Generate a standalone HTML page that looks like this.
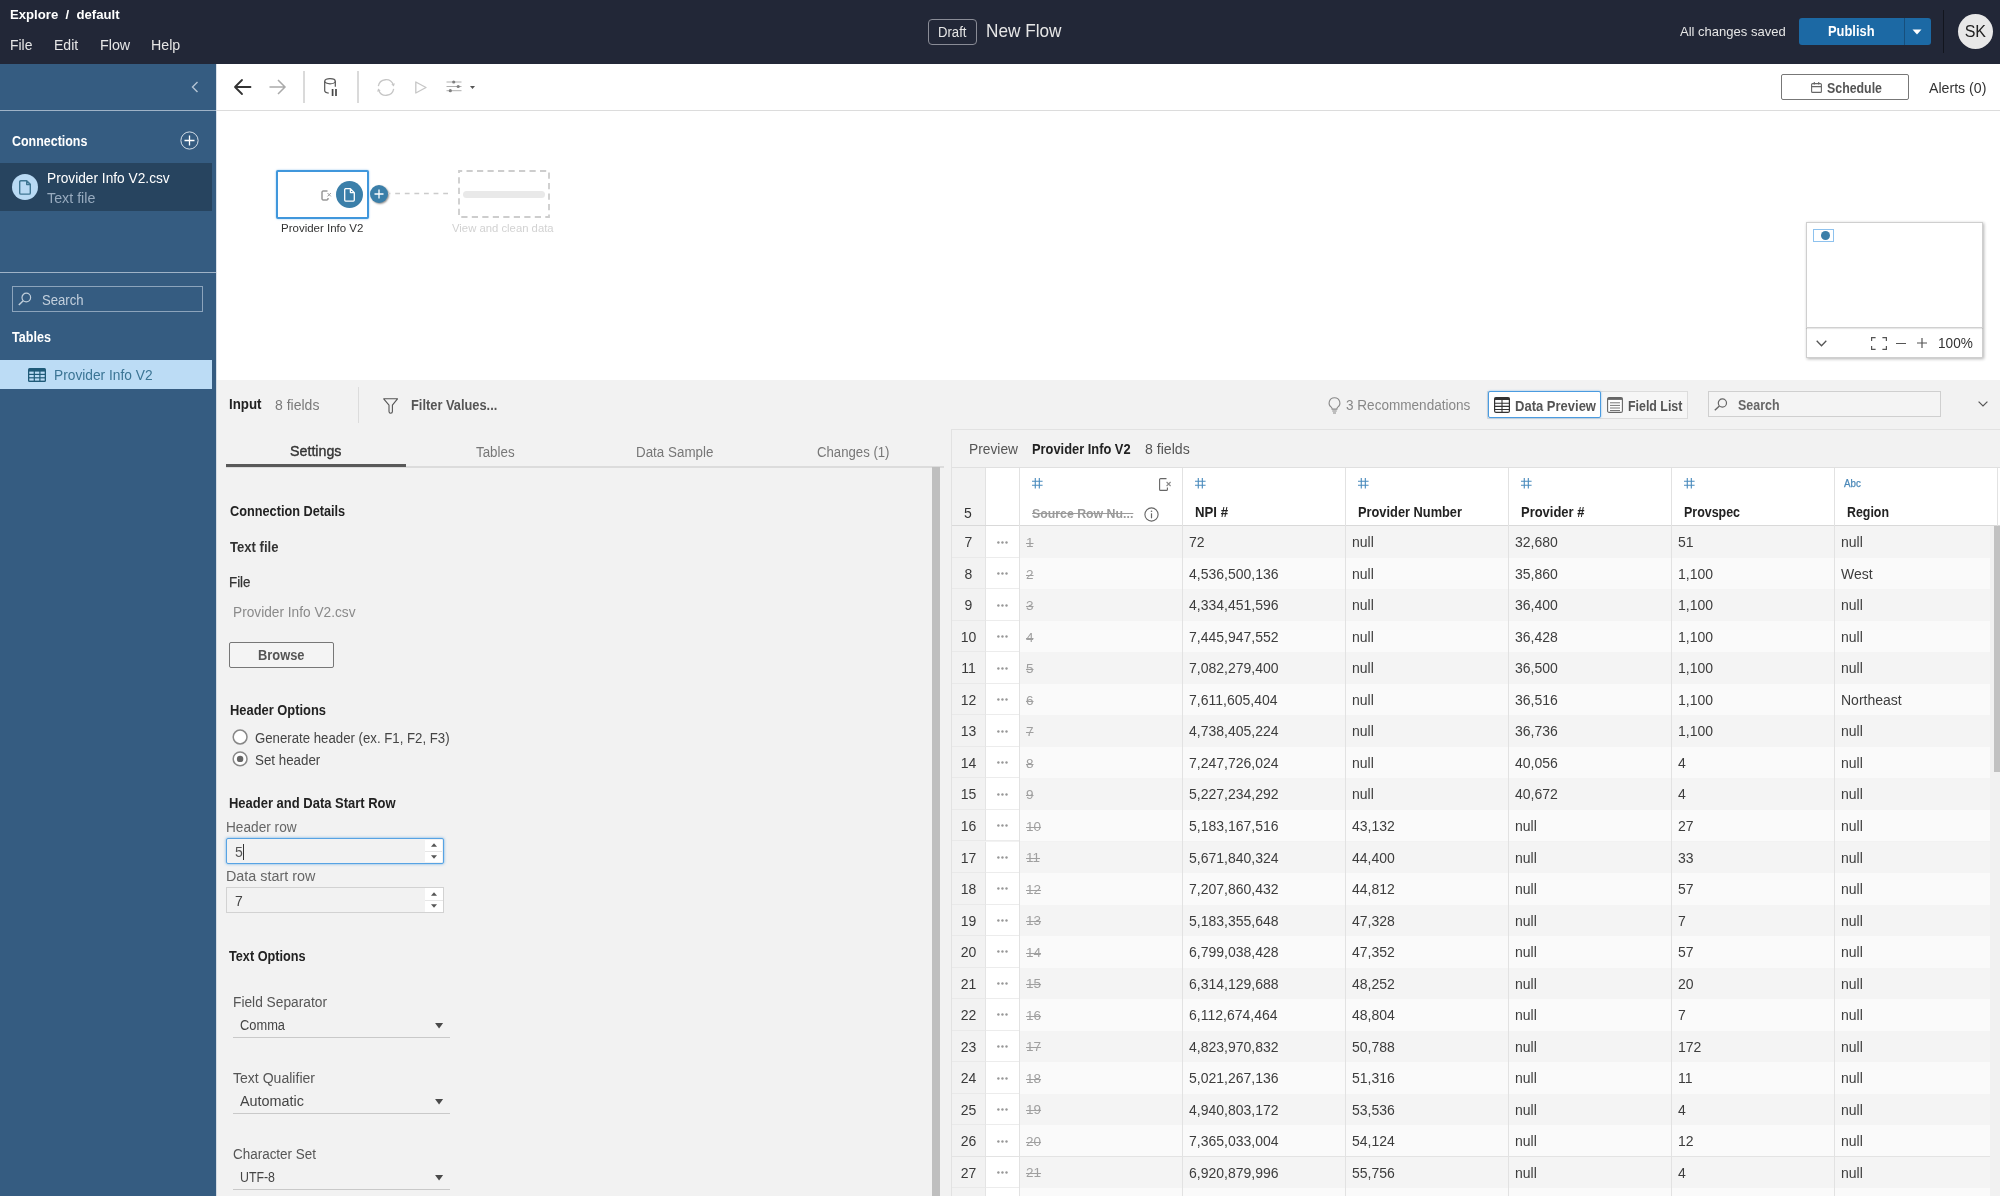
<!DOCTYPE html>
<html>
<head>
<meta charset="utf-8">
<title>New Flow</title>
<style>
*{box-sizing:border-box;margin:0;padding:0}
html,body{width:2000px;height:1196px;overflow:hidden;background:#fff}
body{font-family:"Liberation Sans",sans-serif;font-size:14px;color:#333;position:relative}
#root{position:absolute;left:0;top:0;width:2000px;height:1196px;will-change:transform}
.abs{position:absolute}
.t{position:absolute;white-space:nowrap;line-height:1;transform-origin:0 50%}
.b{font-weight:bold}
svg{position:absolute;overflow:visible}

/* ---------- top header ---------- */
#hdr{position:absolute;left:0;top:0;width:2000px;height:64px;background:#222737}
#hdr .t{color:#e6e6e6}

/* ---------- sidebar ---------- */
#side{position:absolute;left:0;top:64px;width:216px;height:1132px;background:#355c81}
#side .ln{position:absolute;left:0;width:216px;height:1px;background:#9fb3c7}

/* ---------- toolbar + canvas ---------- */
#tool{position:absolute;left:216px;top:64px;width:1784px;height:47px;background:#fff;border-bottom:1px solid #dcdcdc}
#canvas{position:absolute;left:216px;top:111px;width:1784px;height:269px;background:#fff}

/* ---------- bottom pane ---------- */
#pane{position:absolute;left:216px;top:380px;width:1784px;height:816px;background:#f2f2f2}

/* table */
#grid{position:absolute;left:951px;top:429px;width:1049px;height:767px;background:#f2f2f2;border-left:1px solid #e2e2e2;border-top:1px solid #e2e2e2}
.row{position:absolute;left:952px;width:1037.500px;height:31.52px}
.row .rn{position:absolute;left:0;top:0;width:34px;height:100%;background:#f2f2f2;border-right:1px solid #e4e4e4;border-bottom:1px solid #e9e9e9;text-align:center;line-height:33.500px;font-size:14px;color:#3a3a3a}
.row .dots{position:absolute;left:34px;top:0;width:33px;height:100%;background:#fff;border-bottom:1px solid #ececec}
.row .dots svg{fill:#979797}
.row .c{position:absolute;top:1px;line-height:31.5px;font-size:14px;color:#3d3d3d;white-space:nowrap}
.row .c.src{color:#a0a0a0;font-size:13.500px;top:.700px}
.row .c.src s{text-decoration-thickness:1px}
.vl{position:absolute;width:1px;background:#e2e2e2}
</style>
</head>
<body>
<div id="root">

<!-- ================= HEADER ================= -->
<div id="hdr">
  <span class="t b" style="left:10px;top:8px;font-size:13px;color:#fff;transform:scaleX(1.0114)">Explore&nbsp; /&nbsp; default</span>
  <span class="t" style="left:10px;top:37px;font-size:15px;transform:scaleX(0.9267)">File</span>
  <span class="t" style="left:54px;top:37px;font-size:15px;transform:scaleX(0.9358)">Edit</span>
  <span class="t" style="left:100px;top:37px;font-size:15px;transform:scaleX(0.9535)">Flow</span>
  <span class="t" style="left:151px;top:37px;font-size:15px;transform:scaleX(0.9462)">Help</span>

  <div class="abs" style="left:928px;top:19px;width:49px;height:26px;border:1.300px solid #8a8c96;border-radius:4px"></div>
  <span class="t" style="left:938px;top:25px;font-size:14px;transform:scaleX(0.9392)">Draft</span>
  <span class="t" style="left:986px;top:21px;font-size:19px;transform:scaleX(0.9052)">New Flow</span>

  <span class="t" style="left:1680px;top:24.500px;font-size:13.500px;transform:scaleX(0.9655)">All changes saved</span>
  <div class="abs" style="left:1799px;top:18px;width:132px;height:27px;background:#1c69a4;border-radius:3px"></div>
  <div class="abs" style="left:1904px;top:18px;width:1px;height:27px;background:#174f7c"></div>
  <span class="t b" style="left:1828px;top:24px;font-size:14px;color:#fff;transform:scaleX(0.9197)">Publish</span>
  <svg style="left:1912px;top:29px" width="10" height="6" viewBox="0 0 10 6"><path d="M0.5 0.5h9L5 5.5z" fill="#fff"/></svg>
  <div class="abs" style="left:1943px;top:10px;width:1px;height:43px;background:#12151e"></div>
  <div class="abs" style="left:1958px;top:14px;width:35px;height:35px;border-radius:50%;background:#e8e8e8"></div>
  <span class="t" style="left:1964.700px;top:23.500px;font-size:16px;color:#222">SK</span>
</div>

<!-- ================= SIDEBAR ================= -->
<div id="side">
  <svg style="left:190.500px;top:17px" width="8" height="12" viewBox="0 0 8 12"><path d="M6.5 1L1.5 6l5 5" fill="none" stroke="#b4c4d4" stroke-width="1.400"/></svg>
  <div class="ln" style="top:46px"></div>

  <span class="t b" style="left:12px;top:70px;font-size:14px;color:#fff;transform:scaleX(0.8893)">Connections</span>
  <svg style="left:180.200px;top:67.300px" width="19" height="19" viewBox="0 0 19 19"><circle cx="9.5" cy="9.5" r="8.6" fill="none" stroke="#d5dfe9" stroke-width="1"/><path d="M9.5 4.5v10M4.5 9.5h10" stroke="#fff" stroke-width="1.3"/></svg>

  <div class="abs" style="left:0;top:99px;width:212px;height:48px;background:#27445f"></div>
  <div class="abs" style="left:12px;top:110px;width:26.300px;height:26.300px;border-radius:50%;background:#b9daf4"></div>
  <svg style="left:19px;top:116px" width="13" height="15" viewBox="0 0 13 15"><path d="M1.7 0.7h6l3.6 3.6v8.6a1.2 1.2 0 0 1-1.2 1.2H1.9A1.2 1.2 0 0 1 .7 12.9V1.9A1.2 1.2 0 0 1 1.9 .7zM7.7.9v3.6h3.6" fill="none" stroke="#3f7693" stroke-width="1.400" stroke-linejoin="round"/></svg>
  <span class="t" style="left:47px;top:107px;font-size:14.5px;color:#fff;transform:scaleX(0.9457)">Provider Info V2.csv</span>
  <span class="t" style="left:47.300px;top:126.600px;font-size:14px;color:#98abbf;transform:scaleX(1.0196)">Text file</span>

  <div class="ln" style="top:208px"></div>

  <div class="abs" style="left:12px;top:222px;width:191px;height:26px;border:1px solid #8ca4bc"></div>
  <svg style="left:18px;top:228px" width="14" height="14" viewBox="0 0 14 14"><circle cx="8.3" cy="5.5" r="4.3" fill="none" stroke="#c0cedb" stroke-width="1.2"/><path d="M5.2 8.7L.8 13" stroke="#c0cedb" stroke-width="1.5"/></svg>
  <span class="t" style="left:42.400px;top:228.800px;font-size:14px;color:#c3d0dd;transform:scaleX(0.9378)">Search</span>

  <span class="t b" style="left:12px;top:266px;font-size:14px;color:#fff;transform:scaleX(0.8981)">Tables</span>

  <div class="abs" style="left:0;top:296px;width:212px;height:29px;background:#bcdcf5"></div>
  <svg style="left:28px;top:304px" width="18" height="14" viewBox="0 0 18 14"><rect x="0" y="0" width="18" height="14" rx="1.5" fill="#1f5a78"/><g fill="#bcdcf5"><rect x="1.3" y="3.6" width="4.4" height="2.2"/><rect x="6.9" y="3.6" width="4.4" height="2.2"/><rect x="12.5" y="3.6" width="4.2" height="2.2"/><rect x="1.3" y="7" width="4.4" height="2.2"/><rect x="6.9" y="7" width="4.4" height="2.2"/><rect x="12.5" y="7" width="4.2" height="2.2"/><rect x="1.3" y="10.4" width="4.4" height="2.2"/><rect x="6.9" y="10.4" width="4.4" height="2.2"/><rect x="12.5" y="10.4" width="4.2" height="2.2"/></g></svg>
  <span class="t" style="left:53.500px;top:303.700px;font-size:14.5px;color:#3b7595;transform:scaleX(0.9482)">Provider Info V2</span>
</div>

<!-- ================= TOOLBAR ================= -->
<div id="tool">
  <!-- back -->
  <svg style="left:18px;top:15px" width="17" height="16" viewBox="0 0 17 16"><path d="M16.5 8H1.5M8 1L1 8l7 7" fill="none" stroke="#333" stroke-width="1.800" stroke-linecap="round" stroke-linejoin="round"/></svg>
  <!-- forward -->
  <svg style="left:53px;top:15px" width="17" height="16" viewBox="0 0 17 16"><path d="M0.5 8h15M9 1l7 7-7 7" fill="none" stroke="#aaa" stroke-width="1.5"/></svg>
  <div class="abs" style="left:87px;top:7px;width:2px;height:32px;background:#dadada"></div>
  <!-- db pause -->
  <svg style="left:108px;top:14px" width="14" height="19" viewBox="0 0 14 19"><ellipse cx="6" cy="3.2" rx="5.3" ry="2.6" fill="none" stroke="#555" stroke-width="1.2"/><path d="M.7 3.2v9.6c0 1.2 1.6 2 4 2.3M11.3 3.2v5.5" fill="none" stroke="#555" stroke-width="1.2"/><path d="M8.600 11v7M12 11v7" stroke="#484848" stroke-width="1.700"/></svg>
  <div class="abs" style="left:141px;top:7px;width:2px;height:32px;background:#dadada"></div>
  <!-- refresh -->
  <svg style="left:161px;top:14.800px" width="18" height="17" viewBox="0 0 18 17"><path d="M1.320 7.150A7.800 7.800 0 0 1 16.330 5.830M16.680 9.850A7.800 7.800 0 0 1 1.670 11.170" fill="none" stroke="#c6c6c6" stroke-width="1.300"/><path d="M16.850 7.450L17.900 4.200 14.300 5.500zM1.150 9.550L3.700 11.500 .100 12.800z" fill="#c6c6c6"/></svg>
  <!-- play -->
  <svg style="left:199px;top:17px" width="12" height="13" viewBox="0 0 12 13"><path d="M.8 1L11 6.5.8 12z" fill="none" stroke="#c6c6c6" stroke-width="1.3" stroke-linejoin="round"/></svg>
  <!-- sliders -->
  <svg style="left:230px;top:16px" width="17" height="13" viewBox="0 0 17 13"><path d="M.5 2h15M.5 6.500h15M.5 10.700h15" stroke="#b0b0b0" stroke-width="1"/><circle cx="7.700" cy="2" r="1.600" fill="#808080"/><circle cx="12.200" cy="6.500" r="1.600" fill="#808080"/><circle cx="4.300" cy="10.700" r="1.600" fill="#808080"/></svg>
  <svg style="left:254px;top:22px" width="5" height="3" viewBox="0 0 5 3"><path d="M0 0h5L2.500 3z" fill="#555"/></svg>

  <!-- schedule -->
  <div class="abs" style="left:1565px;top:10px;width:128px;height:26px;border:1px solid #777;border-radius:2px;background:#fff"></div>
  <svg style="left:1595px;top:18px" width="11" height="11" viewBox="0 0 11 11"><rect x=".6" y="1.6" width="9.8" height="8.8" rx="1" fill="none" stroke="#666" stroke-width="1.1"/><path d="M.6 4.6h9.8M3.3 0v2.5M7.7 0v2.5" stroke="#666" stroke-width="1.1"/></svg>
  <span class="t b" style="left:1611px;top:16.500px;font-size:14px;color:#555;transform:scaleX(0.8835)">Schedule</span>
  <span class="t" style="left:1713.400px;top:16.500px;font-size:14px;color:#333;transform:scaleX(1.0106)">Alerts (0)</span>
</div>

<!-- ================= CANVAS ================= -->
<div id="canvas">
  <!-- selected node -->
  <div class="abs" style="left:60px;top:59px;width:92.500px;height:48.500px;border:2px solid #4097dc;border-radius:2px;background:#fff;box-shadow:0 0 2px rgba(64,151,220,.6)"></div>
  <svg style="left:105px;top:79px" width="11" height="11" viewBox="0 0 11 11"><path d="M6.5 1H1.8A.8.8 0 0 0 1 1.8v7.4a.8.8 0 0 0 .8.8h4.4a.8.8 0 0 0 .8-.8V8" fill="none" stroke="#666" stroke-width="1"/><path d="M6.5 3l3.4 3.4M9.9 3L6.5 6.4" stroke="#999" stroke-width="1"/></svg>
  <div class="abs" style="left:120px;top:70px;width:27px;height:27px;border-radius:50%;background:#3b7fa9"></div>
  <svg style="left:128px;top:76.500px" width="11" height="14" viewBox="0 0 11 14"><path d="M1.4.7h5l3.9 3.9v7.5a1 1 0 0 1-1 1H1.7a1 1 0 0 1-1-1V1.7a1 1 0 0 1 1-1zM6.4.9v3.7h3.7" fill="none" stroke="#fff" stroke-width="1.3" stroke-linejoin="round"/></svg>
  <!-- plus -->
  <div class="abs" style="left:154px;top:74px;width:18px;height:18px;border-radius:50%;background:#3b7fa9;box-shadow:1px 1px 2px rgba(0,0,0,.45)"></div>
  <svg style="left:158px;top:78px" width="10" height="10" viewBox="0 0 10 10"><path d="M5 .5v9M.5 5h9" stroke="#fff" stroke-width="1.3"/></svg>
  <!-- dashed connector -->
  <svg style="left:172px;top:81px" width="64" height="3" viewBox="0 0 64 3"><path d="M0 1.500h64" stroke="#cbcbcb" stroke-width="1.600" stroke-dasharray="4.800 4.800" stroke-dashoffset="2.400"/></svg>
  <!-- placeholder node -->
  <svg style="left:241.800px;top:59.200px" width="92" height="48" viewBox="0 0 92 48"><rect x="1" y="1" width="90" height="46" fill="none" stroke="#cdcdcd" stroke-width="1.800" stroke-dasharray="6.200 4.300" stroke-dashoffset="3"/></svg>
  <div class="abs" style="left:247px;top:80.300px;width:81.500px;height:7px;border-radius:4px;background:#e9e9e9"></div>
  <span class="t" style="left:65px;top:112px;font-size:11.5px;color:#333;transform:scaleX(0.9992)">Provider Info V2</span>
  <span class="t" style="left:236px;top:112px;font-size:11.5px;color:#d2d2d2;transform:scaleX(0.9828)">View and clean data</span>

  <!-- minimap -->
  <div class="abs" style="left:1590px;top:111px;width:177px;height:136px;background:#fff;border:1px solid #cfcfcf;box-shadow:1px 1px 3px rgba(0,0,0,.3)"></div>
  <div class="abs" style="left:1590px;top:216px;width:177px;height:1px;background:#d0d0d0;box-shadow:0 1px 1px rgba(0,0,0,.12)"></div>
  <div class="abs" style="left:1597px;top:118px;width:21px;height:13px;border:1px solid #8ec2ee;background:#fff"></div>
  <div class="abs" style="left:1605px;top:120px;width:9px;height:9px;border-radius:50%;background:#3b7fa9"></div>
  <svg style="left:1600px;top:229px" width="11" height="7" viewBox="0 0 11 7"><path d="M.7.8l4.8 4.9L10.3.8" fill="none" stroke="#555" stroke-width="1.3"/></svg>
  <svg style="left:1655px;top:226px" width="16" height="13" viewBox="0 0 16 13"><path d="M.6 4V.6H4.6M11.4.6h4V4M15.4 9v3.4h-4M4.6 12.400H.6V9" fill="none" stroke="#555" stroke-width="1.2"/></svg>
  <div class="abs" style="left:1680px;top:231.5px;width:10px;height:1.3px;background:#555"></div>
  <svg style="left:1701px;top:227px" width="10" height="10" viewBox="0 0 10 10"><path d="M5 0v10M0 5h10" stroke="#555" stroke-width="1.2"/></svg>
  <span class="t" style="left:1722px;top:225px;font-size:14px;color:#333;transform:scaleX(0.9717)">100%</span>
</div>

<div class="abs" style="left:216px;top:64px;width:1px;height:316px;background:#d9e0e8"></div>
<!-- ================= BOTTOM PANE ================= -->
<div id="pane">
  <div class="abs" style="left:0;top:0;width:1px;height:816px;background:#d3dae2"></div>
  <span class="t b" style="left:13px;top:17px;font-size:14px;color:#222;transform:scaleX(0.9498)">Input</span>
  <span class="t" style="left:59px;top:18px;font-size:14px;color:#7a7a7a;transform:scaleX(1.0009)">8 fields</span>
  <div class="abs" style="left:142px;top:7px;width:1px;height:36px;background:#dcdcdc"></div>
  <svg style="left:167px;top:18px" width="16" height="15" viewBox="0 0 16 15"><path d="M.7.8h13.800L9.400 7.200v6.300a1.400 1.400 0 0 1-3.400 0V7.200z" fill="none" stroke="#555" stroke-width="1.100" stroke-linejoin="round"/></svg>
  <span class="t b" style="left:195px;top:18px;font-size:14px;color:#555;transform:scaleX(0.9166)">Filter Values...</span>

  <!-- right controls -->
  <svg style="left:1112px;top:17px" width="13" height="17" viewBox="0 0 13 17"><path d="M6.500.700a5.300 5.300 0 0 1 3 9.700c-.5.500-.6 1-.6 1.700H4.100c0-.7-.1-1.200-.6-1.700A5.300 5.300 0 0 1 6.500.7zM4.300 14h4.400M5 16h3" fill="none" stroke="#888" stroke-width="1.1"/></svg>
  <span class="t" style="left:1130px;top:18px;font-size:14px;color:#888;transform:scaleX(0.9688)">3 Recommendations</span>

  <div class="abs" style="left:1271px;top:10.500px;width:201px;height:28px;border:1px solid #dcdcdc;background:#f6f6f6"></div>
  <div class="abs" style="left:1272px;top:11px;width:113px;height:27px;border:1.5px solid #4a9be0;border-radius:2px;background:#fff;box-shadow:0 0 2px rgba(74,155,224,.7)"></div>
  <svg style="left:1278px;top:17px" width="16" height="16" viewBox="0 0 16 16"><rect x=".6" y=".6" width="14.800" height="14.800" rx="1.500" fill="#fff" stroke="#333" stroke-width="1.2"/><path d="M.6 1.800h14.800" stroke="#333" stroke-width="2.400"/><path d="M.6 6.300h14.800M.6 9.400h14.800M.6 12.500h14.800M8 3v12.400" stroke="#333" stroke-width="1.100"/></svg>
  <span class="t b" style="left:1299px;top:19px;font-size:14px;color:#555;transform:scaleX(0.9292)">Data Preview</span>
  <svg style="left:1391px;top:17px" width="16" height="16" viewBox="0 0 16 16"><rect x=".6" y=".6" width="14.800" height="14.800" rx="1.500" fill="#fff" stroke="#666" stroke-width="1.1"/><path d="M.6 1.800h14.800" stroke="#666" stroke-width="2.200"/><path d="M3 5.800h10M3 8.400h10M3 11h10M3 13.500h10" stroke="#777" stroke-width="1"/></svg>
  <span class="t b" style="left:1412px;top:19px;font-size:14px;color:#555;transform:scaleX(0.8852)">Field List</span>

  <div class="abs" style="left:1492px;top:11px;width:233px;height:26px;border:1px solid #cfcfcf;background:#f4f4f4"></div>
  <svg style="left:1498px;top:18px" width="14" height="13" viewBox="0 0 14 13"><circle cx="8.400" cy="5" r="4.100" fill="none" stroke="#666" stroke-width="1.200"/><path d="M5.400 8L.8 12.300" stroke="#666" stroke-width="1.400"/></svg>
  <span class="t b" style="left:1522px;top:18px;font-size:14px;color:#666;transform:scaleX(0.8886)">Search</span>
  <svg style="left:1762px;top:21px" width="10" height="6" viewBox="0 0 10 6"><path d="M.6.6L5 5l4.400-4.400" fill="none" stroke="#555" stroke-width="1.200"/></svg>

  <!-- tabs -->
  <span class="t" style="left:73.700px;top:63.500px;font-size:14px;color:#333;-webkit-text-stroke:.35px #333;transform:scaleX(1.0179)">Settings</span>
  <span class="t" style="left:259.500px;top:64.500px;font-size:14px;color:#777;transform:scaleX(0.9538)">Tables</span>
  <span class="t" style="left:419.600px;top:64.500px;font-size:14px;color:#777;transform:scaleX(0.9563)">Data Sample</span>
  <span class="t" style="left:600.800px;top:64.500px;font-size:14px;color:#777;transform:scaleX(0.9410)">Changes (1)</span>
  <div class="abs" style="left:10px;top:86px;width:718px;height:2px;background:#dcdcdc"></div>
  <div class="abs" style="left:10.300px;top:84.300px;width:179.400px;height:3.200px;background:#595959"></div>
  <div class="abs" style="left:716px;top:87.300px;width:8.300px;height:729px;background:#bfbfbf"></div>

  <!-- settings content -->
  <span class="t b" style="left:13.700px;top:124px;font-size:14px;color:#222;transform:scaleX(0.9085)">Connection Details</span>
  <span class="t b" style="left:13.700px;top:160px;font-size:14px;color:#333;transform:scaleX(0.9349)">Text file</span>
  <span class="t" style="left:13.300px;top:195.200px;font-size:14px;color:#333;-webkit-text-stroke:.25px #333;transform:scaleX(0.9529)">File</span>
  <span class="t" style="left:17px;top:225px;font-size:14px;color:#8a8a8a;transform:scaleX(0.9778)">Provider Info V2.csv</span>
  <div class="abs" style="left:13px;top:261.500px;width:105px;height:26px;border:1.300px solid #777;border-radius:2px;background:#f4f4f4"></div>
  <span class="t b" style="left:42px;top:267.800px;font-size:14px;color:#555;transform:scaleX(0.9194)">Browse</span>

  <span class="t b" style="left:13.500px;top:323.300px;font-size:14px;color:#222;transform:scaleX(0.9209)">Header Options</span>
  <svg style="left:16px;top:349px" width="16" height="16" viewBox="0 0 16 16"><circle cx="8.100" cy="8" r="6.900" fill="#fff" stroke="#888" stroke-width="1.500"/></svg>
  <span class="t" style="left:38.500px;top:351px;font-size:14px;color:#444;transform:scaleX(0.9437)">Generate header (ex. F1, F2, F3)</span>
  <svg style="left:16px;top:371px" width="16" height="16" viewBox="0 0 16 16"><circle cx="8.100" cy="7.900" r="6.900" fill="#fff" stroke="#888" stroke-width="1.500"/><circle cx="8.100" cy="7.900" r="3.200" fill="#666"/></svg>
    <span class="t" style="left:38.500px;top:372.700px;font-size:14px;color:#444;transform:scaleX(0.9533)">Set header</span>

  <span class="t b" style="left:13px;top:416px;font-size:14px;color:#222;transform:scaleX(0.9270)">Header and Data Start Row</span>
  <span class="t" style="left:10px;top:440px;font-size:14px;color:#666;transform:scaleX(0.9755)">Header row</span>
  <div class="abs" style="left:10px;top:458px;width:218px;height:26px;border:1.5px solid #57a3e4;border-radius:2px;background:#f2f2f2;box-shadow:0 0 3px rgba(74,155,224,.8)"></div>
  <div class="abs" style="left:209px;top:460px;width:17px;height:22px;background:#fff"></div>
  <div class="abs" style="left:209px;top:470.500px;width:17px;height:1px;background:#e6e6e6"></div>
  <svg style="left:214.500px;top:463.300px" width="6" height="4" viewBox="0 0 7 4"><path d="M0 4h7L3.500 0z" fill="#555"/></svg>
  <svg style="left:214.500px;top:475.300px" width="6" height="4" viewBox="0 0 7 4"><path d="M0 0h7L3.500 4z" fill="#555"/></svg>
  <span class="t" style="left:19px;top:464.700px;font-size:14px;color:#555">5</span>
  <div class="abs" style="left:27px;top:463.500px;width:1.300px;height:16.500px;background:#333"></div>

  <span class="t" style="left:10px;top:489px;font-size:14px;color:#666;transform:scaleX(1.0248)">Data start row</span>
  <div class="abs" style="left:10px;top:507px;width:218px;height:26px;border:1px solid #d2d2d2;background:#f2f2f2"></div>
  <div class="abs" style="left:209px;top:508px;width:18px;height:24px;background:#fff"></div>
  <div class="abs" style="left:209px;top:519.500px;width:18px;height:1px;background:#e6e6e6"></div>
  <svg style="left:214.500px;top:512px" width="6" height="4" viewBox="0 0 7 4"><path d="M0 4h7L3.500 0z" fill="#555"/></svg>
  <svg style="left:214.500px;top:524px" width="6" height="4" viewBox="0 0 7 4"><path d="M0 0h7L3.500 4z" fill="#555"/></svg>
  <span class="t" style="left:19px;top:514px;font-size:14px;color:#444">7</span>

  <span class="t b" style="left:13px;top:569px;font-size:14px;color:#222;transform:scaleX(0.9062)">Text Options</span>

  <span class="t" style="left:17px;top:615px;font-size:14px;color:#555;transform:scaleX(0.9820)">Field Separator</span>
  <span class="t" style="left:24px;top:638px;font-size:14px;color:#444;transform:scaleX(0.9181)">Comma</span>
  <svg style="left:218.500px;top:643.300px" width="8.200" height="5.400" viewBox="0 0 9 6"><path d="M0 0h9L4.500 6z" fill="#4a4a4a"/></svg>
  <div class="abs" style="left:17px;top:656.500px;width:217px;height:1px;background:#c9c9c9"></div>

  <span class="t" style="left:17px;top:691px;font-size:14px;color:#555;transform:scaleX(1.0036)">Text Qualifier</span>
  <span class="t" style="left:24px;top:714px;font-size:14px;color:#444;transform:scaleX(1.0281)">Automatic</span>
  <svg style="left:218.500px;top:719.300px" width="8.200" height="5.400" viewBox="0 0 9 6"><path d="M0 0h9L4.500 6z" fill="#4a4a4a"/></svg>
  <div class="abs" style="left:17px;top:732.500px;width:217px;height:1px;background:#c9c9c9"></div>

  <span class="t" style="left:17px;top:767px;font-size:14px;color:#555;transform:scaleX(0.9609)">Character Set</span>
  <span class="t" style="left:24px;top:790px;font-size:14px;color:#444;transform:scaleX(0.8822)">UTF-8</span>
  <svg style="left:218.500px;top:795.300px" width="8.200" height="5.400" viewBox="0 0 9 6"><path d="M0 0h9L4.500 6z" fill="#4a4a4a"/></svg>
  <div class="abs" style="left:17px;top:808.500px;width:217px;height:1px;background:#c9c9c9"></div>
</div>

<!-- ================= DATA GRID ================= -->
<div id="grid"></div>
<span class="t" style="left:969px;top:442px;font-size:14px;color:#555;transform:scaleX(0.9840)">Preview</span>
<span class="t b" style="left:1032px;top:442px;font-size:14px;color:#222;transform:scaleX(0.9184)">Provider Info V2</span>
<span class="t" style="left:1145px;top:442px;font-size:14px;color:#555;transform:scaleX(1.0099)">8 fields</span>

<!-- header band -->
<div class="abs" style="left:952px;top:467px;width:1048px;height:59px;background:#fff;border-top:1px solid #e0e0e0;border-bottom:1px solid #d9d9d9"></div>
<div class="abs" style="left:952px;top:468px;width:34px;height:57px;background:#f2f2f2;border-right:1px solid #e2e2e2"></div>
<span class="t" style="left:964px;top:506px;font-size:14px;color:#333">5</span>

<div class="row" style="top:526.30px;background:#f4f4f4">
<div class="rn"><span>7</span></div><div class="dots"><svg style="left:10.600px;top:14.400px" width="11" height="3" viewBox="0 0 11 3"><circle cx="1.400" cy="1.500" r="1.200"/><circle cx="5.450" cy="1.500" r="1.200"/><circle cx="9.500" cy="1.500" r="1.200"/></svg></div>
<span class="c src" style="left:74px"><s>1</s></span>
<span class="c" style="left:237px">72</span>
<span class="c" style="left:400px">null</span>
<span class="c" style="left:563px">32,680</span>
<span class="c" style="left:726px">51</span>
<span class="c" style="left:889px">null</span>
</div>
<div class="row" style="top:557.82px;background:#fafafa">
<div class="rn"><span>8</span></div><div class="dots"><svg style="left:10.600px;top:14.400px" width="11" height="3" viewBox="0 0 11 3"><circle cx="1.400" cy="1.500" r="1.200"/><circle cx="5.450" cy="1.500" r="1.200"/><circle cx="9.500" cy="1.500" r="1.200"/></svg></div>
<span class="c src" style="left:74px"><s>2</s></span>
<span class="c" style="left:237px">4,536,500,136</span>
<span class="c" style="left:400px">null</span>
<span class="c" style="left:563px">35,860</span>
<span class="c" style="left:726px">1,100</span>
<span class="c" style="left:889px">West</span>
</div>
<div class="row" style="top:589.34px;background:#f4f4f4">
<div class="rn"><span>9</span></div><div class="dots"><svg style="left:10.600px;top:14.400px" width="11" height="3" viewBox="0 0 11 3"><circle cx="1.400" cy="1.500" r="1.200"/><circle cx="5.450" cy="1.500" r="1.200"/><circle cx="9.500" cy="1.500" r="1.200"/></svg></div>
<span class="c src" style="left:74px"><s>3</s></span>
<span class="c" style="left:237px">4,334,451,596</span>
<span class="c" style="left:400px">null</span>
<span class="c" style="left:563px">36,400</span>
<span class="c" style="left:726px">1,100</span>
<span class="c" style="left:889px">null</span>
</div>
<div class="row" style="top:620.86px;background:#fafafa">
<div class="rn"><span>10</span></div><div class="dots"><svg style="left:10.600px;top:14.400px" width="11" height="3" viewBox="0 0 11 3"><circle cx="1.400" cy="1.500" r="1.200"/><circle cx="5.450" cy="1.500" r="1.200"/><circle cx="9.500" cy="1.500" r="1.200"/></svg></div>
<span class="c src" style="left:74px"><s>4</s></span>
<span class="c" style="left:237px">7,445,947,552</span>
<span class="c" style="left:400px">null</span>
<span class="c" style="left:563px">36,428</span>
<span class="c" style="left:726px">1,100</span>
<span class="c" style="left:889px">null</span>
</div>
<div class="row" style="top:652.38px;background:#f4f4f4">
<div class="rn"><span>11</span></div><div class="dots"><svg style="left:10.600px;top:14.400px" width="11" height="3" viewBox="0 0 11 3"><circle cx="1.400" cy="1.500" r="1.200"/><circle cx="5.450" cy="1.500" r="1.200"/><circle cx="9.500" cy="1.500" r="1.200"/></svg></div>
<span class="c src" style="left:74px"><s>5</s></span>
<span class="c" style="left:237px">7,082,279,400</span>
<span class="c" style="left:400px">null</span>
<span class="c" style="left:563px">36,500</span>
<span class="c" style="left:726px">1,100</span>
<span class="c" style="left:889px">null</span>
</div>
<div class="row" style="top:683.90px;background:#fafafa">
<div class="rn"><span>12</span></div><div class="dots"><svg style="left:10.600px;top:14.400px" width="11" height="3" viewBox="0 0 11 3"><circle cx="1.400" cy="1.500" r="1.200"/><circle cx="5.450" cy="1.500" r="1.200"/><circle cx="9.500" cy="1.500" r="1.200"/></svg></div>
<span class="c src" style="left:74px"><s>6</s></span>
<span class="c" style="left:237px">7,611,605,404</span>
<span class="c" style="left:400px">null</span>
<span class="c" style="left:563px">36,516</span>
<span class="c" style="left:726px">1,100</span>
<span class="c" style="left:889px">Northeast</span>
</div>
<div class="row" style="top:715.42px;background:#f4f4f4">
<div class="rn"><span>13</span></div><div class="dots"><svg style="left:10.600px;top:14.400px" width="11" height="3" viewBox="0 0 11 3"><circle cx="1.400" cy="1.500" r="1.200"/><circle cx="5.450" cy="1.500" r="1.200"/><circle cx="9.500" cy="1.500" r="1.200"/></svg></div>
<span class="c src" style="left:74px"><s>7</s></span>
<span class="c" style="left:237px">4,738,405,224</span>
<span class="c" style="left:400px">null</span>
<span class="c" style="left:563px">36,736</span>
<span class="c" style="left:726px">1,100</span>
<span class="c" style="left:889px">null</span>
</div>
<div class="row" style="top:746.94px;background:#fafafa">
<div class="rn"><span>14</span></div><div class="dots"><svg style="left:10.600px;top:14.400px" width="11" height="3" viewBox="0 0 11 3"><circle cx="1.400" cy="1.500" r="1.200"/><circle cx="5.450" cy="1.500" r="1.200"/><circle cx="9.500" cy="1.500" r="1.200"/></svg></div>
<span class="c src" style="left:74px"><s>8</s></span>
<span class="c" style="left:237px">7,247,726,024</span>
<span class="c" style="left:400px">null</span>
<span class="c" style="left:563px">40,056</span>
<span class="c" style="left:726px">4</span>
<span class="c" style="left:889px">null</span>
</div>
<div class="row" style="top:778.46px;background:#f4f4f4">
<div class="rn"><span>15</span></div><div class="dots"><svg style="left:10.600px;top:14.400px" width="11" height="3" viewBox="0 0 11 3"><circle cx="1.400" cy="1.500" r="1.200"/><circle cx="5.450" cy="1.500" r="1.200"/><circle cx="9.500" cy="1.500" r="1.200"/></svg></div>
<span class="c src" style="left:74px"><s>9</s></span>
<span class="c" style="left:237px">5,227,234,292</span>
<span class="c" style="left:400px">null</span>
<span class="c" style="left:563px">40,672</span>
<span class="c" style="left:726px">4</span>
<span class="c" style="left:889px">null</span>
</div>
<div class="row" style="top:809.98px;background:#fafafa">
<div class="rn"><span>16</span></div><div class="dots"><svg style="left:10.600px;top:14.400px" width="11" height="3" viewBox="0 0 11 3"><circle cx="1.400" cy="1.500" r="1.200"/><circle cx="5.450" cy="1.500" r="1.200"/><circle cx="9.500" cy="1.500" r="1.200"/></svg></div>
<span class="c src" style="left:74px"><s>10</s></span>
<span class="c" style="left:237px">5,183,167,516</span>
<span class="c" style="left:400px">43,132</span>
<span class="c" style="left:563px">null</span>
<span class="c" style="left:726px">27</span>
<span class="c" style="left:889px">null</span>
</div>
<div class="row" style="top:841.50px;background:#f4f4f4">
<div class="rn"><span>17</span></div><div class="dots"><svg style="left:10.600px;top:14.400px" width="11" height="3" viewBox="0 0 11 3"><circle cx="1.400" cy="1.500" r="1.200"/><circle cx="5.450" cy="1.500" r="1.200"/><circle cx="9.500" cy="1.500" r="1.200"/></svg></div>
<span class="c src" style="left:74px"><s>11</s></span>
<span class="c" style="left:237px">5,671,840,324</span>
<span class="c" style="left:400px">44,400</span>
<span class="c" style="left:563px">null</span>
<span class="c" style="left:726px">33</span>
<span class="c" style="left:889px">null</span>
</div>
<div class="row" style="top:873.02px;background:#fafafa">
<div class="rn"><span>18</span></div><div class="dots"><svg style="left:10.600px;top:14.400px" width="11" height="3" viewBox="0 0 11 3"><circle cx="1.400" cy="1.500" r="1.200"/><circle cx="5.450" cy="1.500" r="1.200"/><circle cx="9.500" cy="1.500" r="1.200"/></svg></div>
<span class="c src" style="left:74px"><s>12</s></span>
<span class="c" style="left:237px">7,207,860,432</span>
<span class="c" style="left:400px">44,812</span>
<span class="c" style="left:563px">null</span>
<span class="c" style="left:726px">57</span>
<span class="c" style="left:889px">null</span>
</div>
<div class="row" style="top:904.54px;background:#f4f4f4">
<div class="rn"><span>19</span></div><div class="dots"><svg style="left:10.600px;top:14.400px" width="11" height="3" viewBox="0 0 11 3"><circle cx="1.400" cy="1.500" r="1.200"/><circle cx="5.450" cy="1.500" r="1.200"/><circle cx="9.500" cy="1.500" r="1.200"/></svg></div>
<span class="c src" style="left:74px"><s>13</s></span>
<span class="c" style="left:237px">5,183,355,648</span>
<span class="c" style="left:400px">47,328</span>
<span class="c" style="left:563px">null</span>
<span class="c" style="left:726px">7</span>
<span class="c" style="left:889px">null</span>
</div>
<div class="row" style="top:936.06px;background:#fafafa">
<div class="rn"><span>20</span></div><div class="dots"><svg style="left:10.600px;top:14.400px" width="11" height="3" viewBox="0 0 11 3"><circle cx="1.400" cy="1.500" r="1.200"/><circle cx="5.450" cy="1.500" r="1.200"/><circle cx="9.500" cy="1.500" r="1.200"/></svg></div>
<span class="c src" style="left:74px"><s>14</s></span>
<span class="c" style="left:237px">6,799,038,428</span>
<span class="c" style="left:400px">47,352</span>
<span class="c" style="left:563px">null</span>
<span class="c" style="left:726px">57</span>
<span class="c" style="left:889px">null</span>
</div>
<div class="row" style="top:967.58px;background:#f4f4f4">
<div class="rn"><span>21</span></div><div class="dots"><svg style="left:10.600px;top:14.400px" width="11" height="3" viewBox="0 0 11 3"><circle cx="1.400" cy="1.500" r="1.200"/><circle cx="5.450" cy="1.500" r="1.200"/><circle cx="9.500" cy="1.500" r="1.200"/></svg></div>
<span class="c src" style="left:74px"><s>15</s></span>
<span class="c" style="left:237px">6,314,129,688</span>
<span class="c" style="left:400px">48,252</span>
<span class="c" style="left:563px">null</span>
<span class="c" style="left:726px">20</span>
<span class="c" style="left:889px">null</span>
</div>
<div class="row" style="top:999.10px;background:#fafafa">
<div class="rn"><span>22</span></div><div class="dots"><svg style="left:10.600px;top:14.400px" width="11" height="3" viewBox="0 0 11 3"><circle cx="1.400" cy="1.500" r="1.200"/><circle cx="5.450" cy="1.500" r="1.200"/><circle cx="9.500" cy="1.500" r="1.200"/></svg></div>
<span class="c src" style="left:74px"><s>16</s></span>
<span class="c" style="left:237px">6,112,674,464</span>
<span class="c" style="left:400px">48,804</span>
<span class="c" style="left:563px">null</span>
<span class="c" style="left:726px">7</span>
<span class="c" style="left:889px">null</span>
</div>
<div class="row" style="top:1030.62px;background:#f4f4f4">
<div class="rn"><span>23</span></div><div class="dots"><svg style="left:10.600px;top:14.400px" width="11" height="3" viewBox="0 0 11 3"><circle cx="1.400" cy="1.500" r="1.200"/><circle cx="5.450" cy="1.500" r="1.200"/><circle cx="9.500" cy="1.500" r="1.200"/></svg></div>
<span class="c src" style="left:74px"><s>17</s></span>
<span class="c" style="left:237px">4,823,970,832</span>
<span class="c" style="left:400px">50,788</span>
<span class="c" style="left:563px">null</span>
<span class="c" style="left:726px">172</span>
<span class="c" style="left:889px">null</span>
</div>
<div class="row" style="top:1062.14px;background:#fafafa">
<div class="rn"><span>24</span></div><div class="dots"><svg style="left:10.600px;top:14.400px" width="11" height="3" viewBox="0 0 11 3"><circle cx="1.400" cy="1.500" r="1.200"/><circle cx="5.450" cy="1.500" r="1.200"/><circle cx="9.500" cy="1.500" r="1.200"/></svg></div>
<span class="c src" style="left:74px"><s>18</s></span>
<span class="c" style="left:237px">5,021,267,136</span>
<span class="c" style="left:400px">51,316</span>
<span class="c" style="left:563px">null</span>
<span class="c" style="left:726px">11</span>
<span class="c" style="left:889px">null</span>
</div>
<div class="row" style="top:1093.66px;background:#f4f4f4">
<div class="rn"><span>25</span></div><div class="dots"><svg style="left:10.600px;top:14.400px" width="11" height="3" viewBox="0 0 11 3"><circle cx="1.400" cy="1.500" r="1.200"/><circle cx="5.450" cy="1.500" r="1.200"/><circle cx="9.500" cy="1.500" r="1.200"/></svg></div>
<span class="c src" style="left:74px"><s>19</s></span>
<span class="c" style="left:237px">4,940,803,172</span>
<span class="c" style="left:400px">53,536</span>
<span class="c" style="left:563px">null</span>
<span class="c" style="left:726px">4</span>
<span class="c" style="left:889px">null</span>
</div>
<div class="row" style="top:1125.18px;background:#fafafa">
<div class="rn"><span>26</span></div><div class="dots"><svg style="left:10.600px;top:14.400px" width="11" height="3" viewBox="0 0 11 3"><circle cx="1.400" cy="1.500" r="1.200"/><circle cx="5.450" cy="1.500" r="1.200"/><circle cx="9.500" cy="1.500" r="1.200"/></svg></div>
<span class="c src" style="left:74px"><s>20</s></span>
<span class="c" style="left:237px">7,365,033,004</span>
<span class="c" style="left:400px">54,124</span>
<span class="c" style="left:563px">null</span>
<span class="c" style="left:726px">12</span>
<span class="c" style="left:889px">null</span>
</div>
<div class="row" style="top:1156.70px;background:#f4f4f4">
<div class="rn"><span>27</span></div><div class="dots"><svg style="left:10.600px;top:14.400px" width="11" height="3" viewBox="0 0 11 3"><circle cx="1.400" cy="1.500" r="1.200"/><circle cx="5.450" cy="1.500" r="1.200"/><circle cx="9.500" cy="1.500" r="1.200"/></svg></div>
<span class="c src" style="left:74px"><s>21</s></span>
<span class="c" style="left:237px">6,920,879,996</span>
<span class="c" style="left:400px">55,756</span>
<span class="c" style="left:563px">null</span>
<span class="c" style="left:726px">4</span>
<span class="c" style="left:889px">null</span>
</div>
<div class="row" style="top:1188.22px;background:#fafafa">
<div class="rn"><span>28</span></div><div class="dots"><svg style="left:10.600px;top:14.400px" width="11" height="3" viewBox="0 0 11 3"><circle cx="1.400" cy="1.500" r="1.200"/><circle cx="5.450" cy="1.500" r="1.200"/><circle cx="9.500" cy="1.500" r="1.200"/></svg></div>
</div>

<div class="abs" style="left:952px;top:1155.700px;width:1037.500px;height:1px;background:#e3e3e3"></div>
<!-- column lines -->
<div class="vl" style="left:951px;top:429px;height:767px"></div>
<div class="vl" style="left:1019px;top:468px;height:728px"></div>
<div class="vl" style="left:1182px;top:468px;height:728px"></div>
<div class="vl" style="left:1345px;top:468px;height:728px"></div>
<div class="vl" style="left:1508px;top:468px;height:728px"></div>
<div class="vl" style="left:1671px;top:468px;height:728px"></div>
<div class="vl" style="left:1834px;top:468px;height:728px"></div>
<div class="vl" style="left:1997px;top:468px;height:59px"></div>

<!-- header content -->
<svg style="left:1031.5px;top:477.600px" width="10.600" height="10.600" viewBox="0 0 11 11"><path d="M3.400 0v11M7.600 0v11M0 3.400h11M0 7.600h11" stroke="#4a8bbd" stroke-width="1.150"/></svg>
<svg style="left:1195px;top:477.600px" width="10.600" height="10.600" viewBox="0 0 11 11"><path d="M3.400 0v11M7.600 0v11M0 3.400h11M0 7.600h11" stroke="#4a8bbd" stroke-width="1.150"/></svg>
<span class="t b" style="left:1195px;top:505px;font-size:14px;color:#222;transform:scaleX(0.9424)">NPI #</span>
<svg style="left:1358px;top:477.600px" width="10.600" height="10.600" viewBox="0 0 11 11"><path d="M3.400 0v11M7.600 0v11M0 3.400h11M0 7.600h11" stroke="#4a8bbd" stroke-width="1.150"/></svg>
<span class="t b" style="left:1358px;top:505px;font-size:14px;color:#222;transform:scaleX(0.9155)">Provider Number</span>
<svg style="left:1521px;top:477.600px" width="10.600" height="10.600" viewBox="0 0 11 11"><path d="M3.400 0v11M7.600 0v11M0 3.400h11M0 7.600h11" stroke="#4a8bbd" stroke-width="1.150"/></svg>
<span class="t b" style="left:1521px;top:505px;font-size:14px;color:#222;transform:scaleX(0.9258)">Provider #</span>
<svg style="left:1684px;top:477.600px" width="10.600" height="10.600" viewBox="0 0 11 11"><path d="M3.400 0v11M7.600 0v11M0 3.400h11M0 7.600h11" stroke="#4a8bbd" stroke-width="1.150"/></svg>
<span class="t b" style="left:1684px;top:505px;font-size:14px;color:#222;transform:scaleX(0.8882)">Provspec</span>
<span class="t" style="left:1844.200px;top:479.300px;font-size:10px;color:#4a88b8;-webkit-text-stroke:.25px #4a88b8;transform:scaleX(0.9748)">Abc</span>
<span class="t b" style="left:1847px;top:505px;font-size:14px;color:#222;transform:scaleX(0.8851)">Region</span>
<span class="t b" style="left:1031.800px;top:507px;font-size:13px;color:#9a9a9a;transform:scaleX(0.9476)"><s>Source Row Nu...</s></span>
<svg style="left:1144.300px;top:506.600px" width="15" height="15" viewBox="0 0 15 15"><circle cx="7.500" cy="7.500" r="6.600" fill="none" stroke="#666" stroke-width="1.100"/><path d="M7.500 6.300v5" stroke="#666" stroke-width="1.200"/><circle cx="7.500" cy="4.300" r=".8" fill="#666"/></svg>
<svg style="left:1159px;top:478px" width="13" height="13" viewBox="0 0 13 13"><path d="M7.500.6H1.600a1 1 0 0 0-1 1v9.800a1 1 0 0 0 1 1h5.800a1 1 0 0 0 1-1V9.500" fill="none" stroke="#666" stroke-width="1.100"/><path d="M7.600 4l4 4M11.600 4l-4 4" stroke="#888" stroke-width="1.100"/></svg>

<!-- grid scrollbar -->
<div class="abs" style="left:1989.500px;top:526px;width:10.500px;height:670px;background:#f1f1f1"></div>
<div class="abs" style="left:1994px;top:526px;width:6px;height:246px;background:#c1c1c1"></div>

</div>
</body>
</html>
